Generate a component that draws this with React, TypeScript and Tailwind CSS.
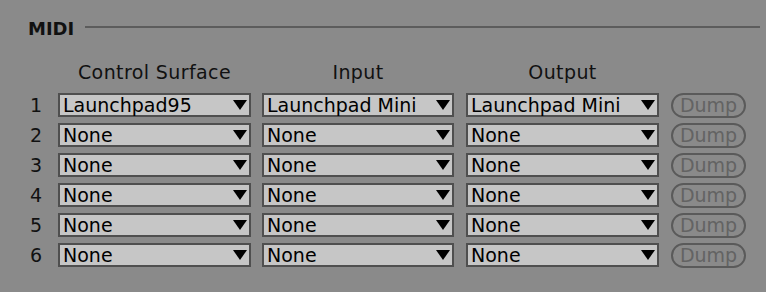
const ROWS = [
  { n: 1, surface: 'Launchpad95', input: 'Launchpad Mini', output: 'Launchpad Mini' },
  { n: 2, surface: 'None', input: 'None', output: 'None' },
  { n: 3, surface: 'None', input: 'None', output: 'None' },
  { n: 4, surface: 'None', input: 'None', output: 'None' },
  { n: 5, surface: 'None', input: 'None', output: 'None' },
  { n: 6, surface: 'None', input: 'None', output: 'None' },
]

function Chooser({ value, width }: { value: string; width: string }) {
  return (
    <div
      className={`${width} h-[24px] flex items-center justify-between border-2 border-[#4f4f4f] bg-[#c6c6c6] pl-[3px] pr-[2px] text-black`}
    >
      <span>{value}</span>
      <svg width="14" height="10" viewBox="0 0 14 10">
        <polygon points="0,0 14,0 7,10" fill="#000" />
      </svg>
    </div>
  )
}

export default function App() {
  return (
    <div
      className="w-[766px] h-[292px] bg-[#8a8a8a] text-[19px] leading-[24px] text-[#111]"
      style={{ fontFamily: '"DejaVu Sans", "Liberation Sans", sans-serif' }}
    >
      <div className="flex items-center pl-[28px] pt-[17px] pr-[6px]">
        <span className="font-bold text-[18px] leading-[24px]">MIDI</span>
        <div className="flex-1 h-[2px] bg-[#5c5c5c] ml-[11px] -mt-[4px]" />
      </div>

      <div className="flex pl-[58px] mt-[19px] h-[24px] items-center tracking-[0.4px]">
        <div className="w-[193px] text-center">Control Surface</div>
        <div className="w-[192px] ml-[11px] text-center">Input</div>
        <div className="w-[193px] ml-[12px] text-center">Output</div>
      </div>

      <div className="flex flex-col gap-[6px] mt-[9px]">
        {ROWS.map((r) => (
          <div key={r.n} className="flex items-center h-[24px]">
            <div className="w-[58px] pl-[30px]">{r.n}</div>
            <Chooser value={r.surface} width="w-[193px]" />
            <div className="ml-[11px]">
              <Chooser value={r.input} width="w-[192px]" />
            </div>
            <div className="ml-[12px]">
              <Chooser value={r.output} width="w-[193px]" />
            </div>
            <div className="ml-[12px] w-[75px] h-[25px] rounded-full border-2 border-[#5a5a5a] flex items-center justify-center text-[19px] text-[#636363]">
              Dump
            </div>
          </div>
        ))}
      </div>
    </div>
  )
}
